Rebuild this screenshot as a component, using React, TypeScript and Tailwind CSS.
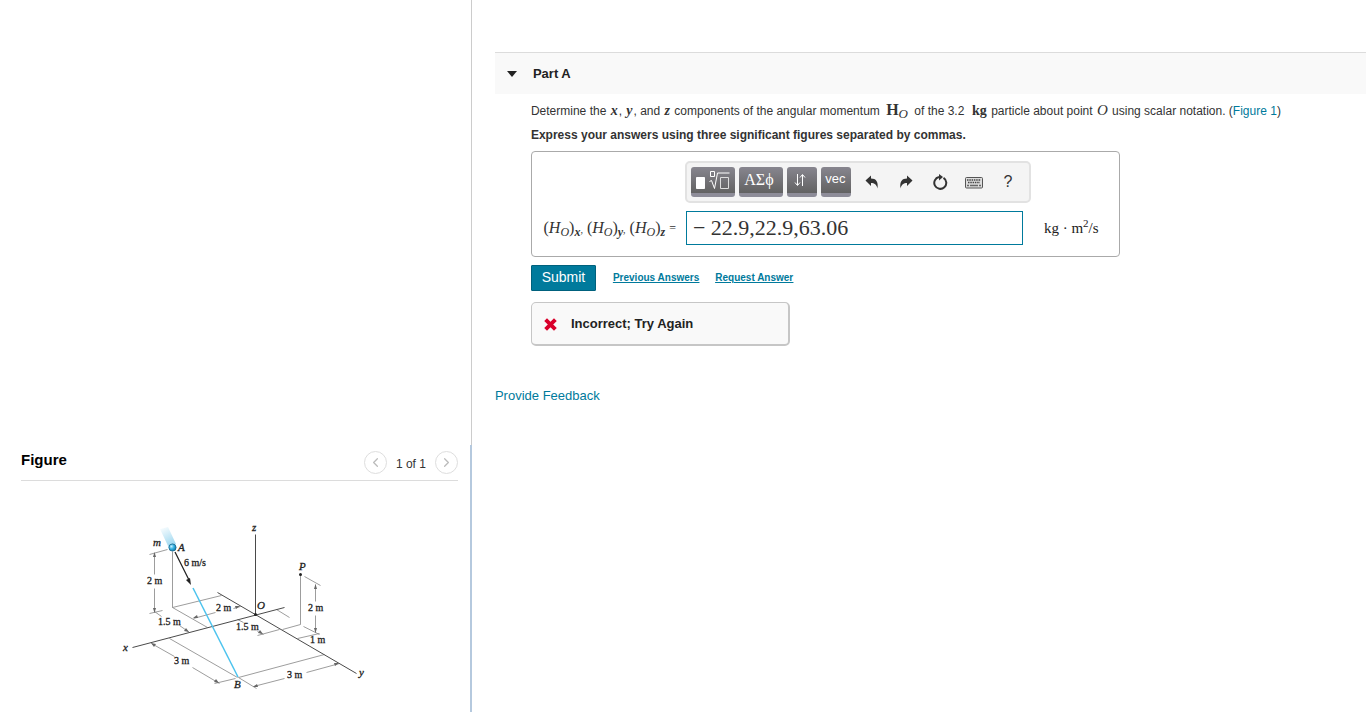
import type {ReactNode} from 'react'
import {ChevronLeft, ChevronRight} from 'lucide-react'

type Line = [number, number, number, number]

const AXES: Line[] = [
  [256, 534, 256, 614],
  [218, 592, 357, 673],
  [133, 647, 285, 607],
]

const GUIDES: Line[] = [
  [173, 551, 173, 607],
  [150, 554, 168, 549],
  [150, 613, 163, 610],
  [173, 607, 222, 595],
  [173, 607, 208, 627],
  [155, 611, 162, 616],
  [180, 625, 190, 632],
  [194, 618, 216, 612],
  [234, 608, 241, 606],
  [238, 619, 244, 622],
  [258, 631, 264, 634],
  [258, 635, 280, 629],
  [283, 629, 301, 624],
  [301, 574, 301, 624],
  [305, 576, 321, 585],
  [277, 609, 290, 617],
  [304, 626, 320, 634],
  [298, 638, 320, 633],
  [239, 677, 325, 654],
  [239, 677, 257, 688],
  [254, 686, 285, 678],
  [307, 672, 340, 663],
  [170, 638, 238, 677],
  [152, 643, 175, 656],
  [193, 667, 220, 683],
  [215, 683, 236, 678],
  [155, 553, 155, 574],
  [155, 588, 155, 612],
  [316, 584, 316, 601],
  [316, 615, 316, 632],
]

const HEADS = [
  'M155.500 552l1.500 5h-3z',
  'M155.500 613l1.500-5h-3z',
  'M316.500 584l1.500 5h-3z',
  'M316.500 633l1.500-5h-3z',
  'M190 632l-5-1 2-3z',
  'M264 634l-5-1 2-3z',
  'M220 683l-5-1 2-3z',
  'M152 643l5 1-2 3z',
  'M194 618l4-3 1 3z',
  'M241 606l-4 3-1-3z',
  'M254 687l4-3 1 3z',
  'M340 663l-4 3-1-3z',
]

const LABELS: {x: number; y: number; text: string; italic?: boolean}[] = [
  {x: 154, y: 546, text: 'm', italic: true},
  {x: 179, y: 551, text: 'A', italic: true},
  {x: 253, y: 531, text: 'z', italic: true},
  {x: 300, y: 570, text: 'P', italic: true},
  {x: 258, y: 609, text: 'O', italic: true},
  {x: 124, y: 651, text: 'x', italic: true},
  {x: 360, y: 676, text: 'y', italic: true},
  {x: 235, y: 688, text: 'B', italic: true},
  {x: 185, y: 566, text: '6 m/s'},
  {x: 148, y: 584, text: '2 m'},
  {x: 217, y: 611, text: '2 m'},
  {x: 309, y: 611, text: '2 m'},
  {x: 159, y: 625, text: '1.5 m'},
  {x: 237, y: 630, text: '1.5 m'},
  {x: 311, y: 643, text: '1 m'},
  {x: 175, y: 664, text: '3 m'},
  {x: 288, y: 678, text: '3 m'},
]

function ParticleDiagram() {
  return (
    <svg
      viewBox="110 515 260 180"
      className="mx-auto block h-[180px] w-[260px]"
      role="img"
      aria-label="Particle A moving toward point B"
    >
      <defs>
        <linearGradient id="trail" x1="0" y1="0" x2="0.4" y2="1">
          <stop offset="0" stopColor="#ffffff" />
          <stop offset="1" stopColor="#9fd8f0" />
        </linearGradient>
        <radialGradient id="ball" cx="0.35" cy="0.35" r="0.7">
          <stop offset="0" stopColor="#c8f0ff" />
          <stop offset="0.5" stopColor="#35b2e2" />
          <stop offset="1" stopColor="#1278a8" />
        </radialGradient>
      </defs>
      <path d="M161 529l8-2 8 17-7 4z" fill="url(#trail)" />
      <g stroke="#848484" strokeWidth="0.8">
        {GUIDES.map(([x1, y1, x2, y2], i) => (
          <line key={i} x1={x1 + 0.5} y1={y1 + 0.5} x2={x2 + 0.5} y2={y2 + 0.5} />
        ))}
      </g>
      <g stroke="#4a4a4a">
        {AXES.map(([x1, y1, x2, y2], i) => (
          <line key={i} x1={x1 + 0.5} y1={y1 + 0.5} x2={x2 + 0.5} y2={y2 + 0.5} />
        ))}
      </g>
      <path d={HEADS.join('')} fill="#666" />
      <path d="M194 588l45 89" stroke="#4cc3ee" strokeWidth="1.5" />
      <path d="M176 552l14 28" stroke="#222" strokeWidth="1.2" />
      <path d="M192 585l-5-5 4-2z" fill="#222" />
      <circle cx="173.500" cy="547.500" r="3.600" fill="url(#ball)" stroke="#14658c" strokeWidth="0.800" />
      <circle cx="256.500" cy="614.500" r="1.500" fill="#222" />
      <circle cx="301.500" cy="574.500" r="1.500" fill="#222" />
      <g className="fill-[#222] font-['Liberation_Serif',serif] text-[10px]">
        {LABELS.map(({x, y, text, italic}) => (
          <text key={`${x}-${y}`} x={x} y={y} className={italic ? 'text-[11px] italic' : ''} stroke="#222" strokeWidth="0.3">
            {text}
          </text>
        ))}
      </g>
    </svg>
  )
}

function Var({children}: {children: ReactNode}) {
  return <i className="mx-px font-['Liberation_Serif',serif] text-[14px] leading-none font-bold">{children}</i>
}

function Component({axis, end}: {axis: string; end?: string}) {
  return (
    <span>
      (<i>H</i>
      <sub className="text-[12px] italic">O</sub>)<sub className="text-[12px] font-bold italic">{axis}</sub>
      {end && <span className="text-[10px]">{end}</span>}
    </span>
  )
}

const KEY =
  "flex h-[30px] items-center justify-center rounded-[3px] border-b-4 border-[#8d8c98] bg-linear-to-b from-[#88868f] to-[#626262] font-['Liberation_Serif',serif] text-white"

const TOOL = 'flex h-6 w-[34px] items-center justify-center text-[#333]'

function Toolbar() {
  return (
    <div className="-ml-px flex h-[42px] w-[346px] items-center rounded-[5px] border-2 border-[#e2e2e2] bg-[#f4f4f4] pl-1">
      <div className="flex gap-1">
        <button type="button" aria-label="Templates" className={`${KEY} w-[44px]`}>
          <svg viewBox="0 0 36 22" className="h-[22px] w-9" fill="none" stroke="#fff">
            <path d="M1.500 8.500h8v11h-8z" fill="#fff" />
            <path d="M15.500 2.500h4v5h-4zM14.500 12.500l2-1 3 8 3-15.500h12" />
            <path d="M25.500 8.500h8v11h-8z" stroke="#ddd" />
          </svg>
        </button>
        <button type="button" className={`${KEY} w-[44px] pr-1 text-[16px]`}>
          ΑΣϕ
        </button>
        <button type="button" aria-label="Subscript and superscript" className={`${KEY} w-[30px] pr-1`}>
          <svg viewBox="0 0 14 16" className="h-4 w-[14px]" fill="none" stroke="#fff">
            <path d="M4.500 2v11M2 10.500l2.500 3 2.500-3M9.500 14V3M7 5.500l2.500-3 2.500 3" />
          </svg>
        </button>
        <button type="button" className={`${KEY} w-[30px] pr-px`}>
          <span className="pb-1 font-['Liberation_Sans',sans-serif] text-[13px] leading-none">vec</span>
        </button>
      </div>
      <div className="ml-1 flex">
        <button type="button" aria-label="Undo" className={TOOL}>
          <svg viewBox="0 0 14 14" className="size-[14px]" fill="currentColor">
            <path d="M0.500 5.500L6 0.500v3c5 0 7.500 3 6.500 10-1-4-3-5.500-6.500-5.500v3z" />
          </svg>
        </button>
        <button type="button" aria-label="Redo" className={TOOL}>
          <svg viewBox="0 0 14 14" className="size-[14px]" fill="currentColor">
            <path d="M13.500 5.500L8 0.500v3c-5 0-7.500 3-6.500 10 1-4 3-5.500 6.500-5.500v3z" />
          </svg>
        </button>
        <button type="button" aria-label="Reset" className={TOOL}>
          <svg viewBox="0 0 16 16" className="size-4" fill="none" stroke="currentColor" strokeWidth="2">
            <path d="M11.500 3.800A6 6 0 1 1 7 3" />
            <path d="M7 0l4 3-4 3.500z" fill="currentColor" stroke="none" />
          </svg>
        </button>
        <button type="button" aria-label="Keyboard shortcuts" className={`${TOOL} pt-[2px]`}>
          <svg viewBox="0 0 18 12" className="h-3 w-[18px]">
            <rect x="0.500" y="0.500" width="17" height="10.500" rx="1" fill="#ddd" stroke="#555" />
            <path d="M2 3h14M3 5.500h12" stroke="#444" strokeWidth="1.500" strokeDasharray="1.500 0.800" />
            <path d="M2 8.500h2M5 8.500h8M14 8.500h2" stroke="#666" strokeWidth="1.500" />
          </svg>
        </button>
        <button type="button" aria-label="Help" className={`${TOOL} text-[16px]`}>
          ?
        </button>
      </div>
    </div>
  )
}

function FigurePanel() {
  return (
    <section id="figure" className="border-r-2 border-[#b5c9de] pr-3 pb-[17px] pl-[21px]">
      <header className="flex h-9 items-center justify-between border-b border-[#dcdcdc]">
        <h2 className="pb-1 text-[15px] font-bold text-black">Figure</h2>
        <div className="flex items-center gap-[9px] text-[12px]">
          <button
            type="button"
            aria-label="Previous figure"
            className="flex size-[23px] items-center justify-center rounded-full border border-[#dedede] text-[#bbb]"
          >
            <ChevronLeft size={15} />
          </button>
          <span className="pt-[2px]">1 of 1</span>
          <button
            type="button"
            aria-label="Next figure"
            className="flex size-[23px] items-center justify-center rounded-full border border-[#dedede] text-[#bbb]"
          >
            <ChevronRight size={15} />
          </button>
        </div>
      </header>
      <div className="pt-[34px]">
        <ParticleDiagram />
      </div>
    </section>
  )
}

function PartA() {
  return (
    <section>
      <h2 className="border-t border-[#dcdcdc] bg-[#f9f9f9]">
        <button type="button" className="flex h-[41px] w-full items-center gap-4 pl-3 text-[13px] font-bold text-[#222]">
          <svg viewBox="0 0 10 6" className="h-[6px] w-[10px]" fill="#222">
            <path d="M0 0h10L5 6z" />
          </svg>
          Part A
        </button>
      </h2>
      <div className="px-9 pt-[5px]">
        <p className="text-[12px] leading-6">
          Determine the <Var>x</Var>, <Var>y</Var>, and <Var>z</Var> components of the angular momentum{' '}
          <span className="mx-[3px] font-['Liberation_Serif',serif] text-[16px] leading-none">
            <b>H</b>
            <sub className="text-[13px] italic">O</sub>
          </span>{' '}
          of the 3.2 &nbsp;<b className="mx-px font-['Liberation_Serif',serif] text-[14px] leading-none">kg</b> particle
          about point <i className="mx-px font-['Liberation_Serif',serif] text-[15px] leading-none">O</i> using scalar
          notation. (
          <a href="#figure" className="text-[#007a9c]">
            Figure 1
          </a>
          )
        </p>
        <p className="text-[12px] leading-6 font-bold">
          Express your answers using three significant figures separated by commas.
        </p>
        <form onSubmit={(e) => e.preventDefault()}>
          <div className="mt-1 grid max-w-[589px] grid-cols-[144px_337px_1fr] gap-x-[10px] gap-y-2 rounded-[4px] border border-[#aaa] py-[9px] pb-[11px]">
            <div className="col-start-2">
              <Toolbar />
            </div>
            <label
              htmlFor="answer"
              className="col-start-1 flex items-center justify-end gap-1 font-['Liberation_Serif',serif] text-[16px] whitespace-nowrap"
            >
              <Component axis="x" end="," />
              <Component axis="y" end="," />
              <Component axis="z" />
              <span className="text-[12px]">=</span>
            </label>
            <input
              id="answer"
              defaultValue="− 22.9,22.9,63.06"
              className="h-[34px] w-full border border-[#007a9c] px-[6px] font-['Liberation_Serif',serif] text-[22px] text-[#333] outline-none"
            />
            <span className="self-center pl-[11px] font-['Liberation_Serif',serif] text-[15px] text-[#222]">
              kg · m<sup className="text-[11px]">2</sup>/s
            </span>
          </div>
          <div className="mt-2 flex items-center">
            <button
              type="submit"
              className="h-[26px] w-[65px] rounded-[1px] border border-[#00617d] bg-[#007a9c] pb-[2px] text-[14px] leading-none text-white"
            >
              Submit
            </button>
            <div className="flex gap-4 pb-px pl-[17px] text-[10px] font-bold text-[#007a9c] underline">
              <a href="#previous">Previous Answers</a>
              <a href="#request">Request Answer</a>
            </div>
          </div>
        </form>
        <div
          role="status"
          className="mt-[11px] flex h-11 max-w-[259px] items-center gap-[14px] rounded-[5px] border border-r-2 border-b-2 border-[#c6c6c6] bg-[#f9f9f9] pt-px pl-3 text-[13px] font-bold text-[#222]"
        >
          <svg viewBox="0 0 12 12" className="size-[13px]" stroke="#d9002b" strokeWidth="3.600">
            <path d="M1.500 1.500l9 9M10.500 1.500l-9 9" />
          </svg>
          Incorrect; Try Again
        </div>
      </div>
    </section>
  )
}

export default function App() {
  return (
    <div className="flex min-h-screen bg-white font-['Liberation_Sans',Arial,sans-serif] text-[#333]">
      <aside className="flex w-[34.55%] min-w-[400px] flex-col">
        <div className="flex-1 border-r border-[#ccc]" />
        <FigurePanel />
      </aside>
      <main className="min-w-0 flex-1 pt-[52px] pl-[23px]">
        <PartA />
        <a href="#feedback" className="mt-10 inline-block text-[13px] text-[#007a9c]">
          Provide Feedback
        </a>
      </main>
    </div>
  )
}
